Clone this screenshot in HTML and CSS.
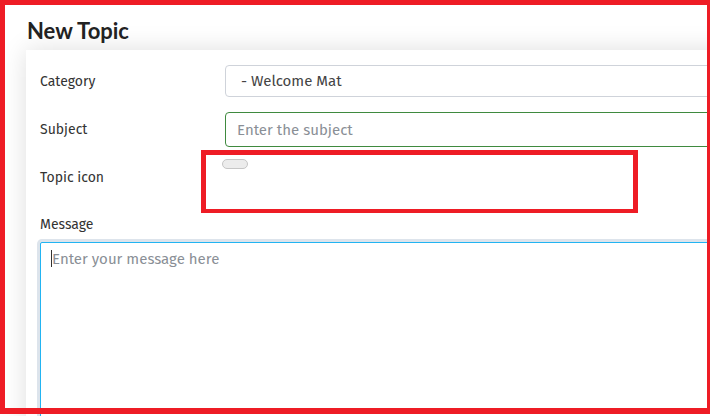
FILE: index.html
```html
<!DOCTYPE html>
<html>
<head>
<meta charset="utf-8">
<link rel="stylesheet" href="styles.css">
</head>
<body>
<div class="page">
  <h1 class="title">New Topic</h1>
  <div class="card">
    <div class="row row-category">
      <label class="label">Category</label>
      <div class="select">&nbsp;- Welcome Mat</div>
    </div>
    <div class="row row-subject">
      <label class="label">Subject</label>
      <input class="input input-subject" type="text" placeholder="Enter the subject">
    </div>
    <div class="row row-icon">
      <label class="label">Topic icon</label>
      <div class="icons"><span class="pill"></span></div>
    </div>
    <div class="message">
      <label class="label label-message">Message</label>
      <div class="textarea-wrap">
        <textarea class="textarea" placeholder="Enter your message here"></textarea>
        <span class="caret"></span>
      </div>
    </div>
  </div>
</div>
<div class="frame-outer"></div>
<div class="frame-inner"></div>
</body>
</html>
```
FILE: styles.css
```css
html, body {
  margin: 0;
  padding: 0;
  background: #ffffff;
  overflow: hidden;
  width: 710px;
  height: 416px;
}
body {
  font-family: "Fira Sans", "Open Sans", "Noto Sans", sans-serif;
  color: #333;
  position: relative;
}
.page {
  width: 760px;
  height: 416px;
  overflow: hidden;
  padding: 14px 0 0 26px;
  box-sizing: border-box;
}
.title {
  margin: 0 0 0 1px;
  font-family: "Lato", "Open Sans", sans-serif;
  font-weight: 700;
  font-size: 22px;
  line-height: 34px;
  height: 36px;
  color: #222;
}
.card {
  background: #ffffff;
  box-shadow: 0 0 24px rgba(0, 0, 0, 0.13);
  padding: 15px 14px 0 14px;
  height: 380px;
}
.row {
  display: flex;
  align-items: center;
}
.label {
  width: 185px;
  flex: none;
  font-size: 14px;
  color: #333;
}
.select {
  flex: 1;
  height: 30px;
  border: 1px solid #cfd3da;
  border-radius: 4px;
  background: #fff;
  font-size: 15px;
  line-height: 30px;
  padding-left: 11px;
  color: #444;
}
.row-subject {
  margin-top: 15px;
}
.input {
  flex: 1;
  height: 35px;
  box-sizing: border-box;
  border: 1px solid #3f8a3f;
  border-radius: 4px;
  padding: 0 11px;
  font-family: inherit;
  font-size: 15px;
  color: #333;
  outline: none;
}
.input::placeholder {
  color: #8a8f96;
}
.row-icon {
  margin-top: 12px;
  height: 36px;
  align-items: stretch;
}
.row-icon .label {
  display: flex;
  align-items: center;
}
.icons {
  flex: 1;
  margin-left: -3px;
}
.pill {
  display: block;
  width: 24px;
  height: 8px;
  border: 1px solid #c6c6c6;
  border-radius: 5px;
  background: #ececec;
}
.message {
  margin-top: 19px;
}
.label-message {
  display: block;
  line-height: 22px;
}
.textarea-wrap {
  position: relative;
  margin-top: 6px;
}
.textarea {
  display: block;
  width: 100%;
  height: 200px;
  box-sizing: border-box;
  border: 1px solid #22b4f2;
  border-radius: 2px;
  box-shadow: 0 0 0 3px #dde4ec;
  outline: none;
  resize: none;
  padding: 6px 11px;
  font-family: inherit;
  font-size: 15px;
  line-height: 20px;
  color: #333;
}
.textarea::placeholder {
  color: #8a8f96;
}
.caret {
  position: absolute;
  left: 11px;
  top: 8px;
  width: 1px;
  height: 17px;
  background: #333;
}
.frame-outer {
  position: absolute;
  left: 0;
  top: 0;
  width: 712px;
  height: 414px;
  box-sizing: border-box;
  border: 5px solid #ee1c25;
  border-bottom-width: 6px;
}
.frame-inner {
  position: absolute;
  left: 201px;
  top: 150px;
  width: 437px;
  height: 63px;
  box-sizing: border-box;
  border: 5px solid #ee1c25;
  border-bottom-width: 4px;
}
```
